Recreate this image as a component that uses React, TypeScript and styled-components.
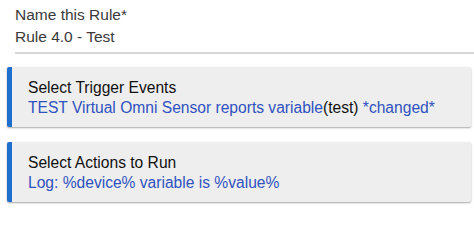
import styled, { createGlobalStyle } from 'styled-components';

const GlobalStyle = createGlobalStyle`
    html, body {
        margin: 0;
        padding: 0;
        background: #ffffff;
    }
    body {
        font-family: "Liberation Sans", Arial, sans-serif;
    }
`;

const Page = styled.div`
    width: 474px;
    height: 228px;
    overflow: hidden;
    padding: 4px 3px 0 7px;
    box-sizing: border-box;
    display: flex;
    flex-direction: column;
    gap: 15px;
`;

const NameField = styled.div`
    margin-left: 8px;
    margin-right: -3px;
    margin-bottom: -2px;
    display: flex;
    flex-direction: column;
    border-bottom: 2px solid #d6d6d6;
    padding-bottom: 4px;
`;

const FieldLabel = styled.div`
    font-size: 15.5px;
    line-height: 22px;
    color: #3a3a3a;
`;

const FieldValue = styled.div`
    font-size: 15.5px;
    line-height: 22px;
    color: #3a3a3a;
`;

const Card = styled.div`
    background: #eeeeee;
    border-left: 5px solid #1f6fce;
    border-radius: 2px;
    box-shadow: 0 1px 2px rgba(0, 0, 0, 0.35);
    padding: 11px 16px 9px 16px;
    display: flex;
    flex-direction: column;
`;

const CardTitle = styled.div`
    font-size: 15.6px;
    line-height: 20px;
    color: #111111;
`;

const CardDetail = styled.div`
    font-size: 15.6px;
    line-height: 20px;
    color: #2f52c0;
    white-space: nowrap;
`;

const Plain = styled.span`
    color: #111111;
`;

export default function App() {
    return (
        <>
            <GlobalStyle />
            <Page>
                <NameField>
                    <FieldLabel>Name this Rule*</FieldLabel>
                    <FieldValue>Rule 4.0 - Test</FieldValue>
                </NameField>
                <Card>
                    <CardTitle>Select Trigger Events</CardTitle>
                    <CardDetail>
                        TEST Virtual Omni Sensor reports variable<Plain>(test)</Plain> *changed*
                    </CardDetail>
                </Card>
                <Card>
                    <CardTitle>Select Actions to Run</CardTitle>
                    <CardDetail>Log: %device% variable is %value%</CardDetail>
                </Card>
            </Page>
        </>
    );
}
